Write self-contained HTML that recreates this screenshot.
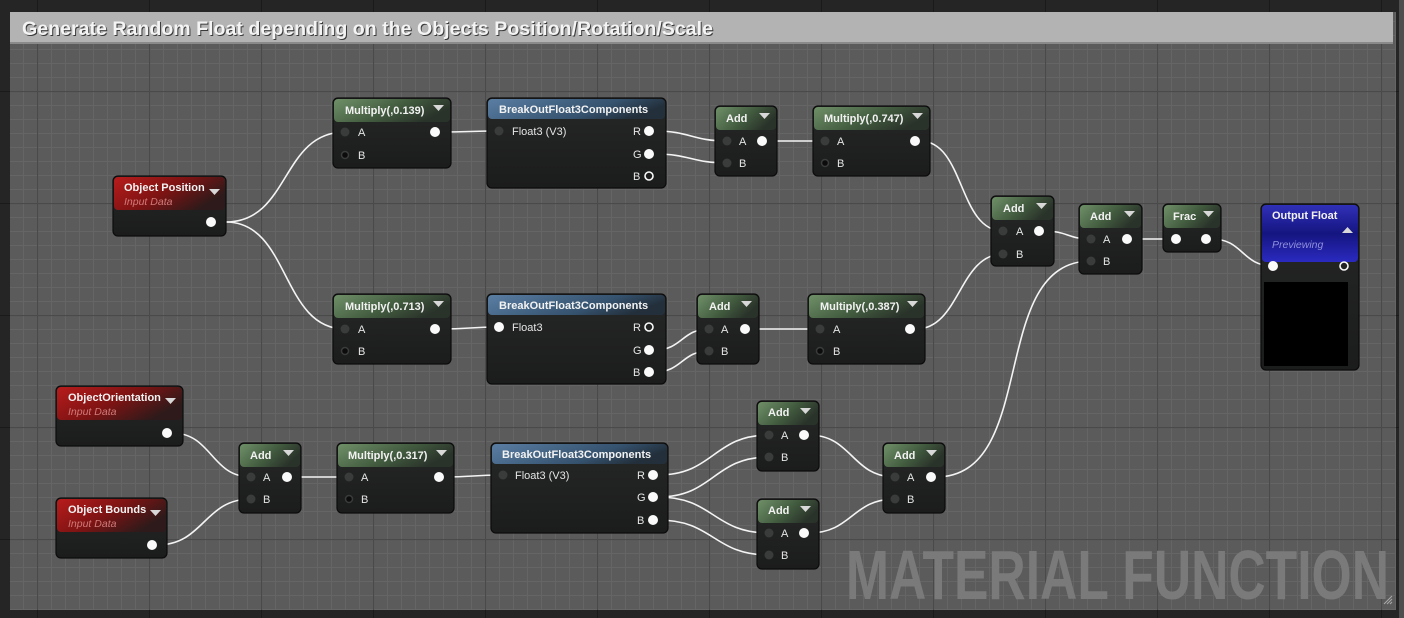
<!DOCTYPE html>
<html><head><meta charset="utf-8"><style>
html,body{margin:0;padding:0;background:#262626;overflow:hidden}
svg{display:block}
text{font-family:"Liberation Sans",sans-serif}
.t{fill:#f2f2f2;font-size:11px;font-weight:bold}
.st{fill:#d07a7a;font-size:10.5px;font-style:italic}
.l{fill:#e6e6e6;font-size:11px}
.w{fill:none;stroke:#f4f4f4;stroke-width:1.6}
</style></head><body>
<svg width="1404" height="618" viewBox="0 0 1404 618" xmlns="http://www.w3.org/2000/svg">
<defs>
<pattern id="gd" x="37" y="91" width="112" height="112" patternUnits="userSpaceOnUse">
<rect width="112" height="112" fill="#252525"/>
<path d="M0 .5H112M.5 0V112" stroke="#1a1a1a" stroke-width="1"/>
</pattern>
<pattern id="gm" x="37" y="91" width="14" height="14" patternUnits="userSpaceOnUse">
<path d="M0 .5H14M.5 0V14" stroke="#656565" stroke-width="1"/>
</pattern>
<pattern id="gM" x="37" y="91" width="112" height="112" patternUnits="userSpaceOnUse">
<path d="M0 .5H112M.5 0V112" stroke="#4a4a4a" stroke-width="1.2"/>
</pattern>
<linearGradient id="gr" x1="0" y1="0" x2="1" y2="0.4"><stop offset="0" stop-color="#6f9068"/><stop offset="0.6" stop-color="#415a3e"/><stop offset="1" stop-color="#2a332a"/></linearGradient>
<linearGradient id="rd" x1="0" y1="0" x2="1" y2="0.5"><stop offset="0" stop-color="#b81c1c"/><stop offset="0.55" stop-color="#7d1313"/><stop offset="1" stop-color="#2e1a1a"/></linearGradient>
<linearGradient id="bl" x1="0" y1="0" x2="1" y2="0.3"><stop offset="0" stop-color="#5a7ea3"/><stop offset="0.7" stop-color="#35526e"/><stop offset="1" stop-color="#23303c"/></linearGradient>
<linearGradient id="pu" x1="0" y1="0" x2="0" y2="1"><stop offset="0" stop-color="#3030b8"/><stop offset="0.5" stop-color="#151580"/><stop offset="1" stop-color="#2a2ac0"/></linearGradient>
<linearGradient id="bd" x1="0" y1="0" x2="0" y2="1"><stop offset="0" stop-color="#262727"/><stop offset="1" stop-color="#1b1c1c"/></linearGradient>
</defs>
<rect width="1404" height="618" fill="url(#gd)"/>
<rect x="1399" y="0" width="5" height="618" fill="#4e4e4e"/>
<rect x="10" y="12" width="1386" height="598" fill="#5b5b5b"/>
<rect x="10" y="12" width="1386" height="598" fill="url(#gm)"/>
<rect x="10" y="12" width="1386" height="598" fill="url(#gM)"/>
<rect x="10" y="12" width="1383" height="31" fill="#b3b3b3"/>
<rect x="10" y="42" width="1383" height="2" fill="#8a8a8a"/>
<text x="23" y="36" textLength="691" lengthAdjust="spacingAndGlyphs" style="font-size:19px;font-weight:bold;fill:#3a3a3a">Generate Random Float depending on the Objects Position/Rotation/Scale</text>
<text x="22" y="35" textLength="691" lengthAdjust="spacingAndGlyphs" style="font-size:19px;font-weight:bold;fill:#f4f4f4">Generate Random Float depending on the Objects Position/Rotation/Scale</text>
<text x="846" y="599" textLength="543" lengthAdjust="spacingAndGlyphs" style="font-family:'Liberation Sans Narrow','Liberation Sans',sans-serif;font-size:70px;font-weight:bold;fill:#7a7a7a">MATERIAL FUNCTION</text>
<path d="M1384 604L1392 596M1387 604L1392 599M1390 604L1392 602" stroke="#aaa" stroke-width="1"/>

<g class="w">
<path d="M226 222C290 222 281 132 345 132"/>
<path d="M226 222C290 222 281 329 345 329"/>
<path d="M441 132C470 132 470 131 498 131"/>
<path d="M655 131C690 131 692 141 727 141"/>
<path d="M655 154C690 154 692 163 727 163"/>
<path d="M767 141C795 141 797 141 825 141"/>
<path d="M920 141C965 141 958 231 1003 231"/>
<path d="M441 329C470 329 470 327 498 327"/>
<path d="M655 350C682 350 682 329 709 329"/>
<path d="M655 372C682 372 682 351 709 351"/>
<path d="M750 329C785 329 785 329 820 329"/>
<path d="M916 329C960 329 959 254 1003 254"/>
<path d="M1044 231C1068 231 1067 239 1091 239"/>
<path d="M936 477C1040 477 987 261 1091 261"/>
<path d="M1132 239C1154 239 1154 239 1176 239"/>
<path d="M1212 239C1243 239 1242 266 1273 266"/>
<path d="M172 433C212 433 211 477 251 477"/>
<path d="M157 545C204 545 204 499 251 499"/>
<path d="M292 477C320 477 321 477 349 477"/>
<path d="M444 477C473 477 473 475 502 475"/>
<path d="M658 475C714 475 713 435 769 435"/>
<path d="M658 497C714 497 713 457 769 457"/>
<path d="M658 497C714 497 713 533 769 533"/>
<path d="M658 520C714 520 713 555 769 555"/>
<path d="M809 435C852 435 852 477 895 477"/>
<path d="M809 533C852 533 852 499 895 499"/>
</g>

<g stroke="#0c0c0c" stroke-width="1.2">
<rect x="113" y="176" width="113" height="60" rx="5" fill="url(#bd)"/>
<rect x="56" y="386" width="127" height="60" rx="5" fill="url(#bd)"/>
<rect x="56" y="498" width="111" height="60" rx="5" fill="url(#bd)"/>
<rect x="333" y="98" width="118" height="70" rx="5" fill="url(#bd)"/>
<rect x="487" y="98" width="179" height="90" rx="5" fill="url(#bd)"/>
<rect x="715" y="106" width="62" height="70" rx="5" fill="url(#bd)"/>
<rect x="813" y="106" width="117" height="70" rx="5" fill="url(#bd)"/>
<rect x="333" y="294" width="118" height="70" rx="5" fill="url(#bd)"/>
<rect x="487" y="294" width="179" height="90" rx="5" fill="url(#bd)"/>
<rect x="697" y="294" width="62" height="70" rx="5" fill="url(#bd)"/>
<rect x="808" y="294" width="117" height="70" rx="5" fill="url(#bd)"/>
<rect x="991" y="196" width="63" height="70" rx="5" fill="url(#bd)"/>
<rect x="1079" y="204" width="63" height="70" rx="5" fill="url(#bd)"/>
<rect x="1163" y="204" width="58" height="48" rx="5" fill="url(#bd)"/>
<rect x="1261" y="204" width="98" height="166" rx="5" fill="url(#bd)"/>
<rect x="239" y="443" width="62" height="70" rx="5" fill="url(#bd)"/>
<rect x="337" y="443" width="117" height="70" rx="5" fill="url(#bd)"/>
<rect x="491" y="443" width="177" height="90" rx="5" fill="url(#bd)"/>
<rect x="757" y="401" width="62" height="70" rx="5" fill="url(#bd)"/>
<rect x="757" y="499" width="62" height="70" rx="5" fill="url(#bd)"/>
<rect x="883" y="443" width="62" height="70" rx="5" fill="url(#bd)"/>
</g>
<g>
<rect x="114" y="177" width="111" height="33" rx="4" fill="url(#rd)"/>
<rect x="57" y="387" width="125" height="33" rx="4" fill="url(#rd)"/>
<rect x="57" y="499" width="109" height="33" rx="4" fill="url(#rd)"/>
<rect x="334" y="99" width="116" height="23" rx="4" fill="url(#gr)"/>
<rect x="488" y="99" width="177" height="20" rx="4" fill="url(#bl)"/>
<rect x="716" y="107" width="60" height="23" rx="4" fill="url(#gr)"/>
<rect x="814" y="107" width="115" height="23" rx="4" fill="url(#gr)"/>
<rect x="334" y="295" width="116" height="23" rx="4" fill="url(#gr)"/>
<rect x="488" y="295" width="177" height="20" rx="4" fill="url(#bl)"/>
<rect x="698" y="295" width="60" height="23" rx="4" fill="url(#gr)"/>
<rect x="809" y="295" width="115" height="23" rx="4" fill="url(#gr)"/>
<rect x="992" y="197" width="61" height="23" rx="4" fill="url(#gr)"/>
<rect x="1080" y="205" width="61" height="23" rx="4" fill="url(#gr)"/>
<rect x="1164" y="205" width="56" height="23" rx="4" fill="url(#gr)"/>
<rect x="1262" y="205" width="96" height="57" rx="4" fill="url(#pu)"/>
<rect x="240" y="444" width="60" height="23" rx="4" fill="url(#gr)"/>
<rect x="338" y="444" width="115" height="23" rx="4" fill="url(#gr)"/>
<rect x="492" y="444" width="175" height="20" rx="4" fill="url(#bl)"/>
<rect x="758" y="402" width="60" height="23" rx="4" fill="url(#gr)"/>
<rect x="758" y="500" width="60" height="23" rx="4" fill="url(#gr)"/>
<rect x="884" y="444" width="60" height="23" rx="4" fill="url(#gr)"/>
<rect x="1264" y="282" width="84" height="84" fill="#000"/>
</g>
<g fill="#d8d8d8">
<path d="M209 189h11l-5.5 6z"/><path d="M165 398h11l-5.5 6z"/><path d="M150 510h11l-5.5 6z"/>
<path d="M433 105h11l-5.5 6z"/><path d="M759 113h11l-5.5 6z"/><path d="M912 113h11l-5.5 6z"/>
<path d="M433 301h11l-5.5 6z"/><path d="M741 301h11l-5.5 6z"/><path d="M907 301h11l-5.5 6z"/>
<path d="M1036 203h11l-5.5 6z"/><path d="M1124 211h11l-5.5 6z"/><path d="M1203 211h11l-5.5 6z"/>
<path d="M283 450h11l-5.5 6z"/><path d="M436 450h11l-5.5 6z"/>
<path d="M800 408h11l-5.5 6z"/><path d="M800 506h11l-5.5 6z"/><path d="M926 450h11l-5.5 6z"/>
<path d="M1342 233h11l-5.5 -6z"/>
</g>
<g class="t">
<text x="124" y="191">Object Position</text>
<text x="68" y="401">ObjectOrientation</text>
<text x="68" y="513">Object Bounds</text>
<text x="345" y="114">Multiply(,0.139)</text>
<text x="499" y="113">BreakOutFloat3Components</text>
<text x="726" y="122">Add</text>
<text x="824" y="122">Multiply(,0.747)</text>
<text x="345" y="310">Multiply(,0.713)</text>
<text x="499" y="309">BreakOutFloat3Components</text>
<text x="709" y="310">Add</text>
<text x="820" y="310">Multiply(,0.387)</text>
<text x="1003" y="212">Add</text>
<text x="1090" y="220">Add</text>
<text x="1173" y="220">Frac</text>
<text x="1272" y="219">Output Float</text>
<text x="250" y="459">Add</text>
<text x="348" y="459">Multiply(,0.317)</text>
<text x="502" y="458">BreakOutFloat3Components</text>
<text x="768" y="416">Add</text>
<text x="768" y="514">Add</text>
<text x="894" y="459">Add</text>
</g>
<g class="st">
<text x="124" y="205">Input Data</text>
<text x="68" y="415">Input Data</text>
<text x="68" y="527">Input Data</text>
<text x="1272" y="248" style="fill:#9090dc">Previewing</text>
</g>
<g fill="#3a3b3b">
<circle cx="345" cy="132" r="4.5"/><circle cx="499" cy="131" r="4.5"/>
<circle cx="727" cy="141" r="4.5"/><circle cx="727" cy="163" r="4.5"/>
<circle cx="825" cy="141" r="4.5"/><circle cx="345" cy="329" r="4.5"/>
<circle cx="709" cy="329" r="4.5"/><circle cx="709" cy="351" r="4.5"/>
<circle cx="820" cy="329" r="4.5"/><circle cx="1003" cy="231" r="4.5"/><circle cx="1003" cy="254" r="4.5"/>
<circle cx="1091" cy="239" r="4.5"/><circle cx="1091" cy="261" r="4.5"/>
<circle cx="251" cy="477" r="4.5"/><circle cx="251" cy="499" r="4.5"/>
<circle cx="349" cy="477" r="4.5"/><circle cx="503" cy="475" r="4.5"/>
<circle cx="769" cy="435" r="4.5"/><circle cx="769" cy="457" r="4.5"/>
<circle cx="769" cy="533" r="4.5"/><circle cx="769" cy="555" r="4.5"/>
<circle cx="895" cy="477" r="4.5"/><circle cx="895" cy="499" r="4.5"/>
</g>
<g fill="#0c0c0c" stroke="#3a3b3b" stroke-width="1.5">
<circle cx="345" cy="155" r="3.5"/><circle cx="825" cy="163" r="3.5"/><circle cx="345" cy="351" r="3.5"/><circle cx="820" cy="351" r="3.5"/><circle cx="349" cy="499" r="3.5"/>
</g>
<g fill="#fafafa">
<circle cx="211" cy="222" r="5"/><circle cx="167" cy="433" r="5"/><circle cx="152" cy="545" r="5"/>
<circle cx="435" cy="132" r="5"/><circle cx="649" cy="131" r="5"/><circle cx="649" cy="154" r="5"/>
<circle cx="762" cy="141" r="5"/><circle cx="915" cy="141" r="5"/>
<circle cx="435" cy="329" r="5"/><circle cx="499" cy="327" r="5"/><circle cx="649" cy="350" r="5"/><circle cx="649" cy="372" r="5"/>
<circle cx="745" cy="329" r="5"/><circle cx="910" cy="329" r="5"/>
<circle cx="1039" cy="231" r="5"/><circle cx="1127" cy="239" r="5"/>
<circle cx="1176" cy="239" r="5"/><circle cx="1206" cy="239" r="5"/><circle cx="1273" cy="266" r="5"/>
<circle cx="287" cy="477" r="5"/><circle cx="439" cy="477" r="5"/>
<circle cx="653" cy="475" r="5"/><circle cx="653" cy="497" r="5"/><circle cx="653" cy="520" r="5"/>
<circle cx="804" cy="435" r="5"/><circle cx="804" cy="533" r="5"/><circle cx="931" cy="477" r="5"/>
</g>
<g fill="none" stroke="#fafafa" stroke-width="1.6">
<circle cx="649" cy="176" r="4"/><circle cx="649" cy="327" r="4"/><circle cx="1344" cy="266" r="4"/>
</g>
<g class="l">
<text x="358" y="136">A</text><text x="358" y="159">B</text>
<text x="512" y="135">Float3 (V3)</text>
<text x="633" y="135">R</text><text x="633" y="158">G</text><text x="633" y="180">B</text>
<text x="739" y="145">A</text><text x="739" y="167">B</text>
<text x="837" y="145">A</text><text x="837" y="167">B</text>
<text x="358" y="333">A</text><text x="358" y="355">B</text>
<text x="512" y="331">Float3</text>
<text x="633" y="331">R</text><text x="633" y="354">G</text><text x="633" y="376">B</text>
<text x="721" y="333">A</text><text x="721" y="355">B</text>
<text x="833" y="333">A</text><text x="833" y="355">B</text>
<text x="1016" y="235">A</text><text x="1016" y="258">B</text>
<text x="1103" y="243">A</text><text x="1103" y="265">B</text>
<text x="263" y="481">A</text><text x="263" y="503">B</text>
<text x="361" y="481">A</text><text x="361" y="503">B</text>
<text x="515" y="479">Float3 (V3)</text>
<text x="637" y="479">R</text><text x="637" y="501">G</text><text x="637" y="524">B</text>
<text x="781" y="439">A</text><text x="781" y="461">B</text>
<text x="781" y="537">A</text><text x="781" y="559">B</text>
<text x="907" y="481">A</text><text x="907" y="503">B</text>
</g>
</svg>
</body></html>
